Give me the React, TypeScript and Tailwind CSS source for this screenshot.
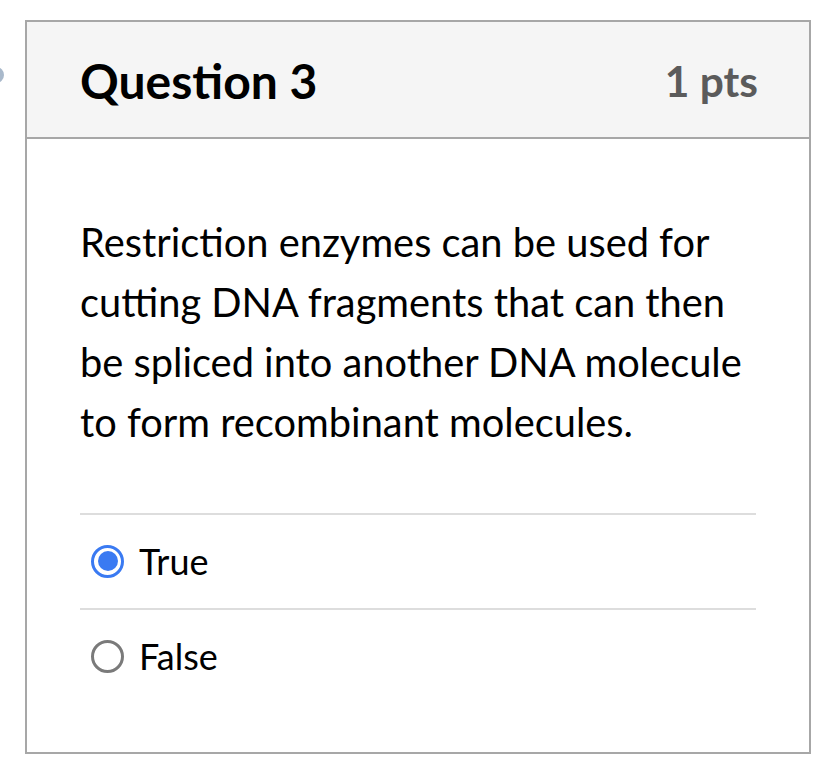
import React from "react";

const OPTIONS = [
  { id: "true", label: "True", checked: true },
  { id: "false", label: "False", checked: false },
];

function Radio({ checked }: { checked: boolean }) {
  if (checked) {
    return (
      <span className="flex h-[33px] w-[33px] shrink-0 items-center justify-center rounded-full border-[3px] border-[#3a7af2] bg-white">
        <span className="h-[20px] w-[20px] rounded-full bg-[#3a7af2]" />
      </span>
    );
  }
  return <span className="h-[33px] w-[33px] shrink-0 rounded-full border-[3px] border-[#7a7a7a] bg-white" />;
}

export default function App() {
  return (
    <div className="relative min-h-screen bg-white pl-[25px] pt-[20px] font-['Lato',sans-serif] text-black">
      {/* cut-off control peeking in from the left */}
      <span className="absolute left-[-12px] top-[67px] h-[16px] w-[16px] rounded-full bg-[#a9b9cb]" />

      <div className="flex h-[734px] w-[786px] flex-col border-2 border-[#a7a7a7]">
        {/* Header */}
        <div className="flex h-[117px] items-center justify-between border-b-2 border-[#a7a7a7] bg-[#f5f5f5] pl-[53px] pr-[51px] pt-[3px]">
          <h2 className="text-[48px] font-bold leading-none">Question 3</h2>
          <span className="text-[42.5px] font-bold leading-none text-[#5b5b5b]">1 pts</span>
        </div>

        {/* Body */}
        <div className="flex flex-col px-[53px] pt-[73px]">
          <p className="text-[39.8px] leading-[60px]">
            Restriction enzymes can be used for cutting DNA fragments that can then be spliced into another DNA molecule to form recombinant molecules.
          </p>

          <div className="mt-[61px]">
            {OPTIONS.map((opt) => (
              <label
                key={opt.id}
                className="flex h-[95px] items-center gap-[15px] border-t-2 border-[#dddddd] pb-[1px] pl-[11px]"
              >
                <Radio checked={opt.checked} />
                <span className="text-[36px] leading-none">{opt.label}</span>
              </label>
            ))}
          </div>
        </div>
      </div>
    </div>
  );
}
